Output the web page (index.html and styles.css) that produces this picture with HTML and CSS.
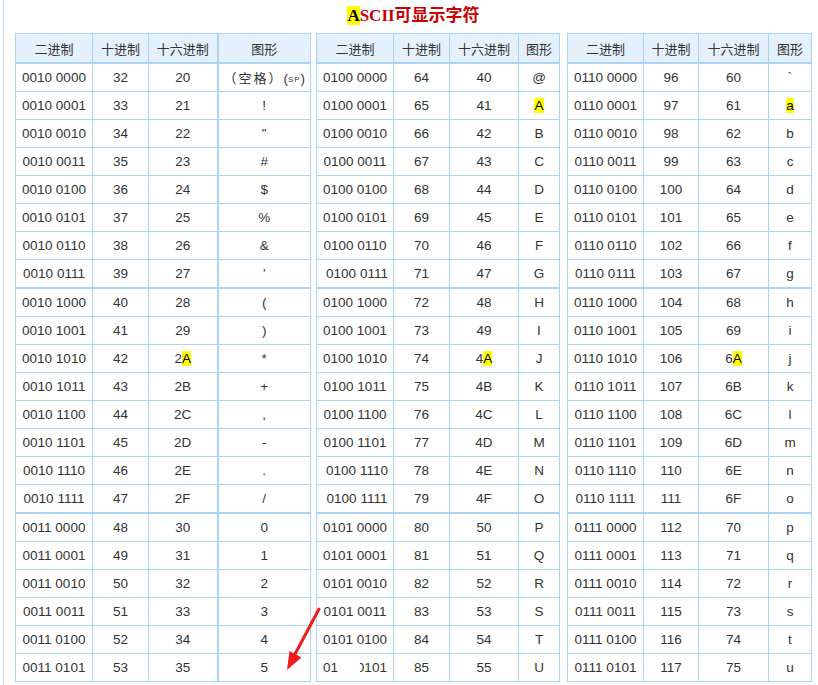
FILE: index.html
```html
<!DOCTYPE html>
<html lang="zh-CN">
<head>
<meta charset="utf-8">
<title>ASCII可显示字符</title>
<link rel="stylesheet" href="styles.css">
</head>
<body>
<div class="page">
  <h1 class="title"><span class="hl">A</span>SCII可显示字符</h1>
  <div class="tables">
    <table class="t1">
      <colgroup><col class="c1-bin"><col class="c1-dec"><col class="c1-hex"><col class="c1-chr"></colgroup>
      <thead><tr><th>二进制</th><th>十进制</th><th>十六进制</th><th class="sep">图形</th></tr></thead>
      <tbody>
        <tr><td>0010 0000</td><td>32</td><td>20</td><td class="sep"><span class="cjk">（空格）</span><span class="sp">(<small>SP</small>)</span></td></tr>
        <tr><td>0010 0001</td><td>33</td><td>21</td><td class="sep">!</td></tr>
        <tr><td>0010 0010</td><td>34</td><td>22</td><td class="sep">"</td></tr>
        <tr><td>0010 0011</td><td>35</td><td>23</td><td class="sep">#</td></tr>
        <tr><td>0010 0100</td><td>36</td><td>24</td><td class="sep">$</td></tr>
        <tr><td>0010 0101</td><td>37</td><td>25</td><td class="sep">%</td></tr>
        <tr><td>0010 0110</td><td>38</td><td>26</td><td class="sep">&amp;</td></tr>
        <tr><td>0010 0111</td><td>39</td><td>27</td><td class="sep">'</td></tr>
      </tbody>
      <tbody>
        <tr><td>0010 1000</td><td>40</td><td>28</td><td class="sep">(</td></tr>
        <tr><td>0010 1001</td><td>41</td><td>29</td><td class="sep">)</td></tr>
        <tr><td>0010 1010</td><td>42</td><td>2<span class="hl">A</span></td><td class="sep">*</td></tr>
        <tr><td>0010 1011</td><td>43</td><td>2B</td><td class="sep">+</td></tr>
        <tr><td>0010 1100</td><td>44</td><td>2C</td><td class="sep">,</td></tr>
        <tr><td>0010 1101</td><td>45</td><td>2D</td><td class="sep">-</td></tr>
        <tr><td>0010 1110</td><td>46</td><td>2E</td><td class="sep">.</td></tr>
        <tr><td>0010 1111</td><td>47</td><td>2F</td><td class="sep">/</td></tr>
      </tbody>
      <tbody>
        <tr><td>0011 0000</td><td>48</td><td>30</td><td class="sep">0</td></tr>
        <tr><td>0011 0001</td><td>49</td><td>31</td><td class="sep">1</td></tr>
        <tr><td>0011 0010</td><td>50</td><td>32</td><td class="sep">2</td></tr>
        <tr><td>0011 0011</td><td>51</td><td>33</td><td class="sep">3</td></tr>
        <tr><td>0011 0100</td><td>52</td><td>34</td><td class="sep">4</td></tr>
        <tr><td>0011 0101</td><td>53</td><td>35</td><td class="sep">5</td></tr>
      </tbody>
    </table>

    <table class="t2">
      <colgroup><col class="c2-bin"><col class="c2-dec"><col class="c2-hex"><col class="c2-chr"></colgroup>
      <thead><tr><th>二进制</th><th>十进制</th><th>十六进制</th><th>图形</th></tr></thead>
      <tbody>
        <tr><td>0100 0000</td><td>64</td><td>40</td><td>@</td></tr>
        <tr><td>0100 0001</td><td>65</td><td>41</td><td><span class="hl">A</span></td></tr>
        <tr><td>0100 0010</td><td>66</td><td>42</td><td>B</td></tr>
        <tr><td>0100 0011</td><td>67</td><td>43</td><td>C</td></tr>
        <tr><td>0100 0100</td><td>68</td><td>44</td><td>D</td></tr>
        <tr><td>0100 0101</td><td>69</td><td>45</td><td>E</td></tr>
        <tr><td>0100 0110</td><td>70</td><td>46</td><td>F</td></tr>
        <tr><td><span class="ind">0100 0111</span></td><td>71</td><td>47</td><td>G</td></tr>
      </tbody>
      <tbody>
        <tr><td>0100 1000</td><td>72</td><td>48</td><td>H</td></tr>
        <tr><td>0100 1001</td><td>73</td><td>49</td><td>I</td></tr>
        <tr><td>0100 1010</td><td>74</td><td>4<span class="hl">A</span></td><td>J</td></tr>
        <tr><td>0100 1011</td><td>75</td><td>4B</td><td>K</td></tr>
        <tr><td>0100 1100</td><td>76</td><td>4C</td><td>L</td></tr>
        <tr><td>0100 1101</td><td>77</td><td>4D</td><td>M</td></tr>
        <tr><td><span class="ind">0100 1110</span></td><td>78</td><td>4E</td><td>N</td></tr>
        <tr><td><span class="ind">0100 1111</span></td><td>79</td><td>4F</td><td>O</td></tr>
      </tbody>
      <tbody>
        <tr><td>0101 0000</td><td>80</td><td>50</td><td>P</td></tr>
        <tr><td>0101 0001</td><td>81</td><td>51</td><td>Q</td></tr>
        <tr><td>0101 0010</td><td>82</td><td>52</td><td>R</td></tr>
        <tr><td>0101 0011</td><td>83</td><td>53</td><td>S</td></tr>
        <tr><td>0101 0100</td><td>84</td><td>54</td><td>T</td></tr>
        <tr><td>0101 0101</td><td>85</td><td>55</td><td>U</td></tr>
      </tbody>
    </table>

    <table class="t3">
      <colgroup><col class="c3-bin"><col class="c3-dec"><col class="c3-hex"><col class="c3-chr"></colgroup>
      <thead><tr><th>二进制</th><th>十进制</th><th>十六进制</th><th>图形</th></tr></thead>
      <tbody>
        <tr><td>0110 0000</td><td>96</td><td>60</td><td>`</td></tr>
        <tr><td>0110 0001</td><td>97</td><td>61</td><td><span class="hl">a</span></td></tr>
        <tr><td>0110 0010</td><td>98</td><td>62</td><td>b</td></tr>
        <tr><td>0110 0011</td><td>99</td><td>63</td><td>c</td></tr>
        <tr><td>0110 0100</td><td>100</td><td>64</td><td>d</td></tr>
        <tr><td>0110 0101</td><td>101</td><td>65</td><td>e</td></tr>
        <tr><td>0110 0110</td><td>102</td><td>66</td><td>f</td></tr>
        <tr><td>0110 0111</td><td>103</td><td>67</td><td>g</td></tr>
      </tbody>
      <tbody>
        <tr><td>0110 1000</td><td>104</td><td>68</td><td>h</td></tr>
        <tr><td>0110 1001</td><td>105</td><td>69</td><td>i</td></tr>
        <tr><td>0110 1010</td><td>106</td><td>6<span class="hl">A</span></td><td>j</td></tr>
        <tr><td>0110 1011</td><td>107</td><td>6B</td><td>k</td></tr>
        <tr><td>0110 1100</td><td>108</td><td>6C</td><td>l</td></tr>
        <tr><td>0110 1101</td><td>109</td><td>6D</td><td>m</td></tr>
        <tr><td>0110 1110</td><td>110</td><td>6E</td><td>n</td></tr>
        <tr><td>0110 1111</td><td>111</td><td>6F</td><td>o</td></tr>
      </tbody>
      <tbody>
        <tr><td>0111 0000</td><td>112</td><td>70</td><td>p</td></tr>
        <tr><td>0111 0001</td><td>113</td><td>71</td><td>q</td></tr>
        <tr><td>0111 0010</td><td>114</td><td>72</td><td>r</td></tr>
        <tr><td>0111 0011</td><td>115</td><td>73</td><td>s</td></tr>
        <tr><td>0111 0100</td><td>116</td><td>74</td><td>t</td></tr>
        <tr><td>0111 0101</td><td>117</td><td>75</td><td>u</td></tr>
      </tbody>
    </table>
  </div>

  <div class="patch"></div>
  <svg class="arrow" width="60" height="80" viewBox="270 600 60 80" aria-hidden="true">
    <line x1="319" y1="609" x2="294" y2="656" stroke="#ee1c1c" stroke-width="3" stroke-linecap="round"/>
    <polygon points="287,670 301.5,657.5 289.5,651" fill="#ee1c1c"/>
  </svg>
</div>
</body>
</html>
```

FILE: styles.css
```css
html, body {
  margin: 0;
  padding: 0;
  background: #ffffff;
}

body {
  font-family: "Liberation Sans", "Noto Sans CJK SC", sans-serif;
  font-size: 13.5px;
  color: #333333;
  overflow: hidden;
  height: 685px;
}

.page {
  position: relative;
  margin-left: 3px;
  border-left: 1px solid #b7dcf7;
  padding-left: 11px;
  height: 685px;
}

.title {
  margin: 0;
  height: 33px;
  line-height: 32px;
  text-align: center;
  font-family: "Liberation Serif", "Noto Sans CJK SC", serif;
  font-size: 17px;
  font-weight: bold;
  color: #c80000;
  padding-right: 6px;
}

.title .hl {
  color: #000000;
}

.hl {
  background: #ffff00;
  color: #000000;
}

.tables {
  display: flex;
  align-items: flex-start;
  gap: 5px;
}

table {
  border-collapse: collapse;
  table-layout: fixed;
}

.t1 { width: 295px; }
.t2 { width: 243px; }
.t3 { width: 244px; margin-left: 2px; }

.c1-bin { width: 77px; }
.c1-dec { width: 56px; }
.c1-hex { width: 69px; }
.c1-chr { width: 93px; }

.c2-bin { width: 77px; }
.c2-dec { width: 56px; }
.c2-hex { width: 69px; }
.c2-chr { width: 41px; }

.c3-bin { width: 76px; }
.c3-dec { width: 55px; }
.c3-hex { width: 70px; }
.c3-chr { width: 43px; }

th, td {
  border: 1px solid #a9d4f5;
  padding: 0;
  text-align: center;
  white-space: nowrap;
  font-weight: normal;
}

th {
  height: 28px;
  background: #e5f0fd;
  font-family: "Noto Sans CJK SC", "Liberation Sans", sans-serif;
  font-size: 13px;
}

td {
  height: 27px;
}

thead th {
  border-bottom: 2px solid #a9d4f5;
}

tbody + tbody tr:first-child td {
  border-top: 2px solid #a9d4f5;
}

.t1 .sep {
  border-left: 2px solid #a9d4f5;
}

.cjk {
  font-family: "Noto Sans CJK SC", sans-serif;
  font-size: 13px;
  letter-spacing: 2px;
}

.sp small {
  font-size: 8px;
  letter-spacing: 1px;
  vertical-align: 1px;
}

.ind {
  padding-left: 4px;
}

.patch {
  position: absolute;
  left: 334px;
  top: 654px;
  width: 22px;
  height: 25px;
  background: #ffffff;
}

.arrow {
  position: absolute;
  left: 266px;
  top: 600px;
}
```
